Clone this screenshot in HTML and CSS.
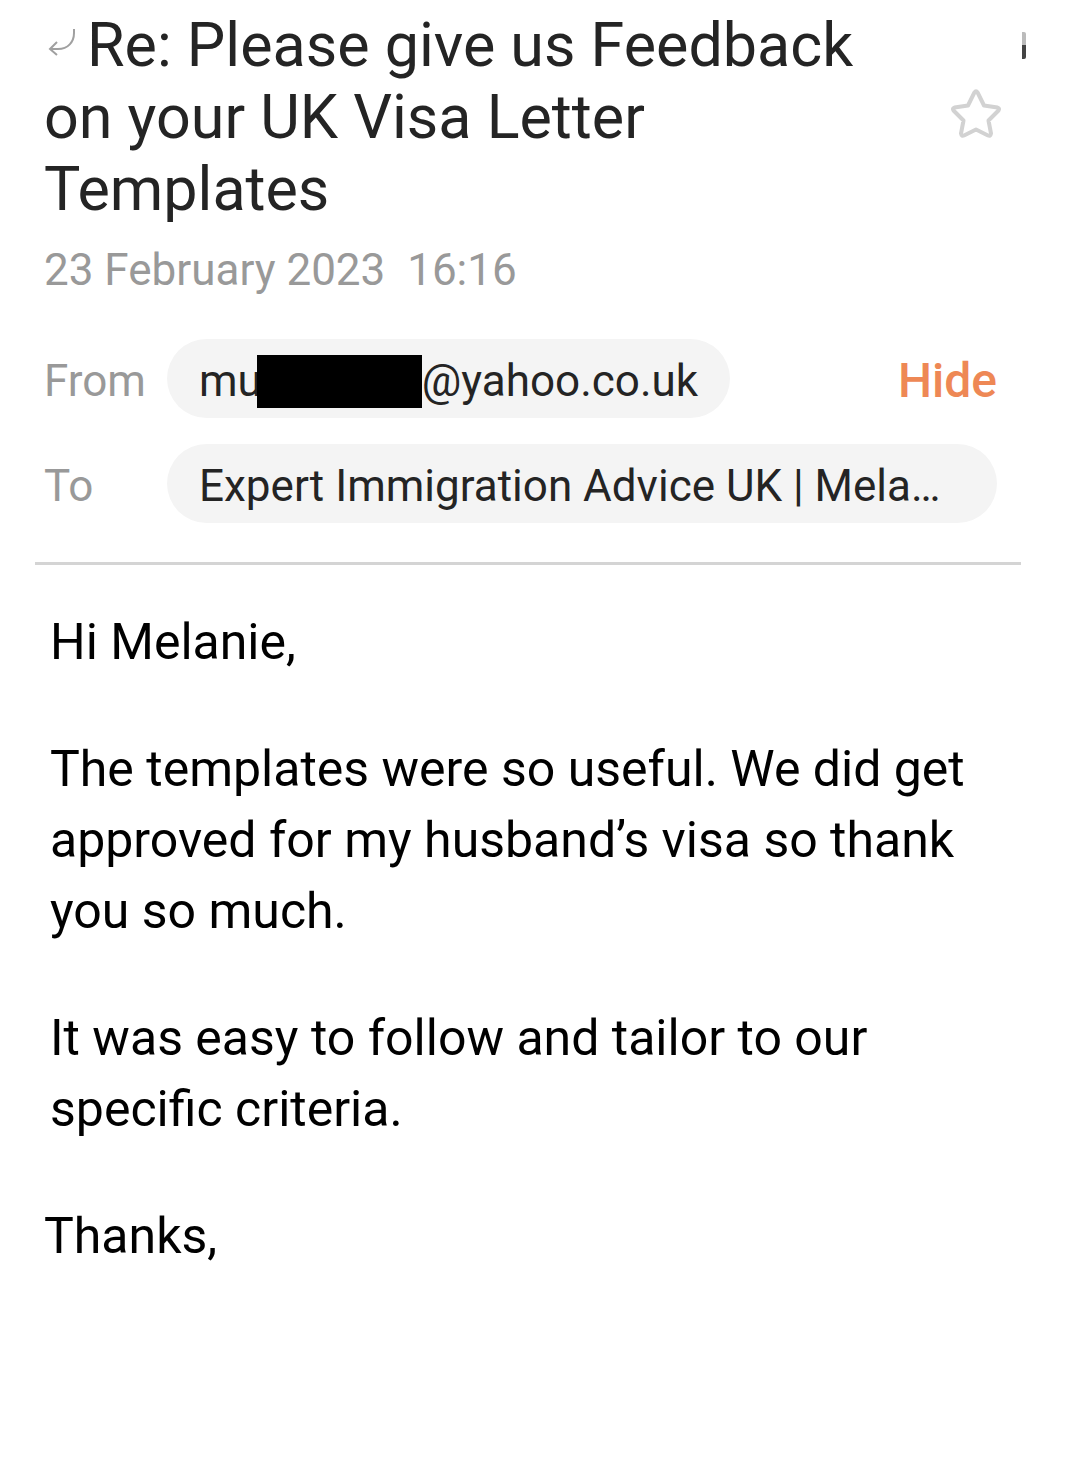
FILE: index.html
```html
<!DOCTYPE html>
<html lang="en">
<head>
  <meta charset="UTF-8">
  <meta name="viewport" content="width=device-width, initial-scale=1">
  <title>Mail</title>
  <link rel="stylesheet" href="styles.css">
</head>
<body>

  <header class="mail-header">
    <div class="subject-row">
      <h1><svg class="reply-icon" viewBox="0 0 28 28" aria-hidden="true"><path d="M26 1v4c0 9-6 16-16 16H2M9 14l-7 7 7 6"/></svg>Re: Please give us Feedback on your UK Visa Letter Templates</h1>
      <button class="star" type="button" aria-label="Star">
        <svg viewBox="0 0 52 52" aria-hidden="true"><path d="M24.4 4.5Q26 2 27.6 4.5L34 17.5L47.5 19.5Q50 20.5 48.5 22.5L38.5 32.5L41 45.5Q40.500 48.500 38 47.500L26 41.500L14 47.500Q11.500 48.500 11 45.500L13.500 32.500L3.500 22.500Q2 20.500 4.500 19.500L18 17.500Z"/></svg>
      </button>
      <span class="scroll-mark"></span>
    </div>
    <time class="date" datetime="2023-02-23T16:16">23 February 2023&nbsp; 16:16</time>

    <div class="people">
      <span class="label">From</span>
      <span class="chip">mu<span class="redacted"></span>@yahoo.co.uk</span>
      <button class="hide" type="button">Hide</button>
    </div>
    <div class="people">
      <span class="label">To</span>
      <span class="chip chip-wide">Expert Immigration Advice UK | Mela…</span>
    </div>
  </header>

  <main class="message">
    <p>Hi Melanie,</p>
    <p>The templates were so useful. We did get approved for my husband’s visa so thank you so much.</p>
    <p>It was easy to follow and tailor to our specific criteria.</p>
  </main>
  <p class="sign-off">Thanks,</p>

</body>
</html>
```
FILE: styles.css
```css
* {
  box-sizing: border-box;
}
body {
  margin: 0;
  background-color: #fff;
  color: #000;
  font-family: Roboto, "Liberation Sans", sans-serif;
  font-size: 50px;
  line-height: 71px;
}
button {
  padding: 0;
  border: none;
  background: none;
  font-family: inherit;
  cursor: pointer;
}
.mail-header {
  margin: 0 59px 0 35px;
  padding: 9px 24px 39px 9px;
  border-bottom: 3px solid #d4d4d4;
}
.subject-row {
  display: flex;
  position: relative;
  justify-content: space-between;
}
h1 {
  flex: 1;
  max-width: 830px;
  margin: 0;
  color: #242424;
  font-size: 61px;
  font-weight: 400;
  line-height: 72px;
}
.reply-icon {
  width: 28px;
  height: 28px;
  margin: 0 11px 10px 4px;
  fill: none;
  stroke: #a0a0a0;
  stroke-width: 2;
}
.star {
  width: 52px;
  height: 52px;
  margin: 79px -5px 0 0;
}
.star svg {
  display: block;
  fill: none;
  stroke: #d2d2d2;
  stroke-width: 4;
  stroke-linejoin: round;
}
.scroll-mark {
  position: absolute;
  top: 23px;
  right: -29px;
  width: 4px;
  height: 27px;
  border-radius: 0 2px 2px 0;
  background: linear-gradient(#bbb 50%, #444 50%);
}
.date {
  display: block;
  margin: 12px 0 36px;
  color: #999;
  font-size: 44px;
  line-height: 66px;
}
.people {
  display: flex;
  align-items: center;
  color: #242424;
  font-size: 44px;
  line-height: 79px;
}
.people + .people {
  margin-top: 26px;
}
.label {
  flex: 0 0 123px;
  padding-top: 5px;
  color: #999;
  line-height: 74px;
}
.chip {
  display: flex;
  align-items: center;
  padding: 5px 32px 0;
  border-radius: 40px;
  background-color: #f4f4f4;
  line-height: 74px;
  white-space: nowrap;
}
.chip-wide {
  flex: 1;
}
/* covers the end of the visible part of the address */
.redacted {
  width: 165px;
  height: 53px;
  margin-left: -5px;
  background-color: #000;
}
.hide {
  margin-left: auto;
  padding-top: 4px;
  color: #ee8855;
  font-size: 48px;
  font-weight: 500;
}
.message {
  padding: 42px 50px 0;
}
p {
  margin: 0 0 56px;
}
.sign-off {
  margin: 0;
  padding: 0 44px;
}
```
